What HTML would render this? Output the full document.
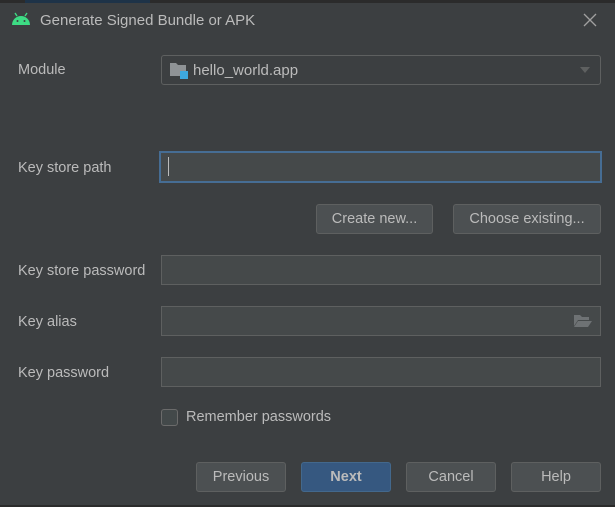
<!DOCTYPE html>
<html><head><style>
*{box-sizing:border-box;margin:0;padding:0}
body{width:615px;height:507px;background:#3c3f41;font-family:"Liberation Sans",sans-serif;font-size:14.5px;color:#bbbbbb;position:relative;overflow:hidden}
.a{position:absolute}
.lbl{position:absolute;left:18px;font-size:14.5px;color:#bbbbbb}
.inp{position:absolute;left:161px;width:440px;height:30px;background:#45494a;border:1px solid #5e6060}
.btn{position:absolute;height:30px;background:#4c5052;border:1px solid #5e6060;border-radius:3px;color:#bbbbbb;font-size:14.5px;text-align:center;line-height:28px}
</style></head><body>
<div class="a" style="left:0;top:0;width:615px;height:3px;background:#2b2b2b"></div>
<div class="a" style="left:25px;top:0;width:125px;height:3px;background:#1e3348"></div>
<svg class="a" style="left:10px;top:12px" width="22" height="14" viewBox="0 0 22 14"><path d="M2 13 A9 9 0 0 1 20 13 Z" fill="#3ddc84"/><line x1="5" y1="1" x2="7" y2="4" stroke="#3ddc84" stroke-width="1.4"/><line x1="17" y1="1" x2="15" y2="4" stroke="#3ddc84" stroke-width="1.4"/><circle cx="7.5" cy="9" r="1" fill="#3c3f41"/><circle cx="14.5" cy="9" r="1" fill="#3c3f41"/></svg>
<div class="a" style="left:40px;top:12px;font-size:15px;color:#bbbbbb">Generate Signed Bundle or APK</div>
<svg class="a" style="left:583px;top:13px" width="14" height="14"><path d="M1 1L13 13M13 1L1 13" stroke="#a0a0a0" stroke-width="1.3"/></svg>
<div class="lbl" style="top:62px">Module</div>
<div class="a" style="left:161px;top:55px;width:440px;height:30px;border:1px solid #5e6060;border-radius:3px;background:#3c3f41"></div>
<svg class="a" style="left:169px;top:61px" width="20" height="20"><path d="M1 2h6l2 2h8v11H1z" fill="#8f9396"/><rect x="11" y="10" width="8" height="8" fill="#3ea8de"/></svg>
<div class="a" style="left:193px;top:62px;font-size:15px;color:#bbbbbb">hello_world.app</div>
<svg class="a" style="left:580px;top:67px" width="10" height="6"><path d="M0 0h10L5 6z" fill="#5e6060"/></svg>
<div class="lbl" style="top:160px">Key store path</div>
<div class="a" style="left:159px;top:151px;width:443px;height:32px;border:2px solid #466d94;background:#45494a"></div>
<div class="a" style="left:168px;top:157px;width:1px;height:19px;background:#bbbbbb"></div>
<div class="btn" style="left:316px;top:204px;width:117px">Create new...</div>
<div class="btn" style="left:453px;top:204px;width:148px">Choose existing...</div>
<div class="lbl" style="top:263px">Key store password</div>
<div class="inp" style="top:255px"></div>
<div class="lbl" style="top:314px">Key alias</div>
<div class="inp" style="top:306px"></div>
<svg class="a" style="left:574px;top:313px" width="18" height="15"><path d="M0 2h6l2 2h7v3H4L0 13z" fill="#6e7274"/><path d="M4 8h14l-4 6H0z" fill="#6e7274"/></svg>
<div class="lbl" style="top:365px">Key password</div>
<div class="inp" style="top:357px"></div>
<div class="a" style="left:161px;top:409px;width:17px;height:17px;border:1px solid #6b6b6b;border-radius:3px;background:#43494a"></div>
<div class="a" style="left:186px;top:409px;font-size:14.5px">Remember passwords</div>
<div class="btn" style="left:196px;top:462px;width:90px">Previous</div>
<div class="btn" style="left:301px;top:462px;width:90px;background:#365880;border-color:#43688c;color:#bbbbbb;font-weight:bold">Next</div>
<div class="btn" style="left:406px;top:462px;width:90px">Cancel</div>
<div class="btn" style="left:511px;top:462px;width:90px">Help</div>
<div class="a" style="left:0;top:505px;width:615px;height:2px;background:#2b2b2b"></div>
</body></html>
